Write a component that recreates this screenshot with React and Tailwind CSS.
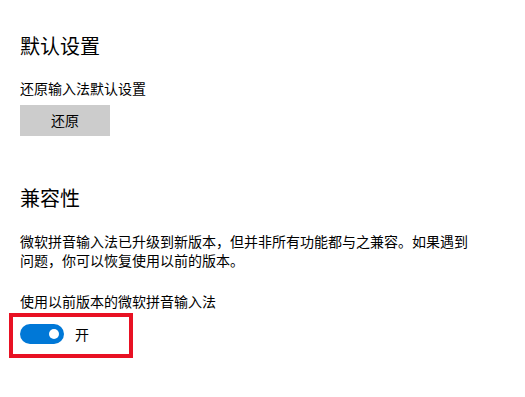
export default function App() {
  return (
    <div className="min-h-[397px] bg-white pl-[20px] pt-[32px] text-black" style={{ fontFamily: '"Microsoft YaHei", "Noto Sans CJK SC", "Noto Sans", sans-serif' }}>
      {/* Default settings */}
      <h2 className="text-[20px] leading-[28px] font-normal">默认设置</h2>
      <p className="mt-[18px] text-[14px] leading-[20px]">还原输入法默认设置</p>
      <button className="mt-[7px] flex h-[31px] w-[90px] items-center justify-center bg-[#cccccc] text-[14px]">
        还原
      </button>

      {/* Compatibility */}
      <h2 className="mt-[48px] text-[20px] leading-[28px] font-normal">兼容性</h2>
      <p className="mt-[20px] w-[455px] text-[14px] leading-[19px]">
        微软拼音输入法已升级到新版本，但并非所有功能都与之兼容。如果遇到问题，你可以恢复使用以前的版本。
      </p>
      <p className="mt-[21px] text-[14px] leading-[20px]">使用以前版本的微软拼音输入法</p>
      <div className="relative mt-[13px] flex items-center">
        <div className="flex h-[20px] w-[44px] items-center justify-end rounded-full bg-[#0078d7] pr-[5px]">
          <div className="h-[10px] w-[10px] rounded-full bg-white" />
        </div>
        <span className="ml-[11px] text-[14px] leading-[20px]">开</span>
        <div className="absolute left-[-11px] top-[-11px] h-[45px] w-[124px] border-4 border-[#e81123]" />
      </div>
    </div>
  );
}
